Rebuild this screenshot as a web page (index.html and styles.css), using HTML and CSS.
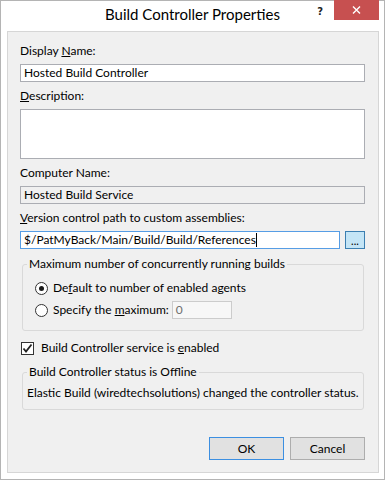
FILE: index.html
```html
<!DOCTYPE html>
<html lang="en">
<head>
  <meta charset="UTF-8" />
  <title>Build Controller Properties</title>
  <link rel="stylesheet" href="styles.css">
</head>
<body>
  <div class="window">
    <!-- Title bar -->
    <div class="titlebar">
      <span></span>
      <span class="title">Build Controller Properties</span>
      <div class="caption-buttons">
        <span class="help">?</span>
        <span class="close">
          <svg width="9" height="8" viewBox="0 0 9 8">
            <path d="M1 0.5 L8 7.5 M8 0.5 L1 7.5" stroke="#fff" stroke-width="1.4" fill="none" />
          </svg>
        </span>
      </div>
    </div>

    <!-- Dialog body -->
    <div class="client">
      <label class="field-label">Display <u>N</u>ame:</label>
      <div class="textbox">Hosted Build Controller</div>

      <label class="field-label"><u>D</u>escription:</label>
      <div class="textbox multiline"></div>

      <label class="field-label">Computer Name:</label>
      <div class="textbox readonly">Hosted Build Service</div>

      <label class="field-label"><u>V</u>ersion control path to custom assemblies:</label>
      <div class="path-row">
        <div class="textbox focused">$/PatMyBack/Main/Build/Build/References<span class="caret"></span></div>
        <button class="browse">...</button>
      </div>

      <fieldset class="group">
        <legend>Maximum number of concurrently running builds</legend>
        <div class="group-body radios">
          <div class="option-row">
            <span class="radio checked"></span>
            <span>De<u>f</u>ault to number of enabled agents</span>
          </div>
          <div class="option-row">
            <span class="radio"></span>
            <span>Specify the <u>m</u>aximum:</span>
            <div class="textbox small disabled">0</div>
          </div>
        </div>
      </fieldset>

      <div class="check-row">
        <span class="checkbox">
          <svg width="11" height="11" viewBox="0 0 11 11">
            <path d="M1.5 5.5 L4 8.5 L9.5 1.5" stroke="#222" stroke-width="1.8" fill="none" />
          </svg>
        </span>
        <span>Build Controller service is <u>e</u>nabled</span>
      </div>

      <fieldset class="group status">
        <legend>Build Controller status is Offline</legend>
        <div class="group-body">Elastic Build (wiredtechsolutions) changed the controller status.</div>
      </fieldset>

      <div class="button-row">
        <button class="btn default">OK</button>
        <button class="btn">Cancel</button>
      </div>
    </div>
  </div>
</body>
</html>
```

FILE: styles.css
```css
/* Basic reset */
* {
  box-sizing: border-box;
}
html, body {
  margin: 0;
  padding: 0;
}
body {
  font-family: "Segoe UI", Lato, sans-serif;
  font-size: 12px;
  color: #000;
  background: #fff;
}
/* Window frame */
.window {
  width: 385px;
  height: 480px;
  border: 1px solid #b4b4b4;
  background: #fff;
  display: flex;
  flex-direction: column;
}
/* Title bar */
.titlebar {
  height: 30px;
  display: grid;
  grid-template-columns: 1fr auto 1fr;
}
.titlebar .title {
  font-size: 15px;
  line-height: 26px;
  color: #000;
  white-space: nowrap;
}
.caption-buttons {
  display: flex;
  justify-content: flex-end;
  align-items: flex-start;
  margin-right: 5px;
}
.help {
  font-family: "DejaVu Sans", sans-serif;
  font-weight: bold;
  font-size: 10px;
  line-height: 22px;
  color: #222;
  margin-right: 11px;
}
.close {
  width: 45px;
  height: 20px;
  margin-top: -1px;
  background: #c75050;
  display: flex;
  align-items: center;
  justify-content: center;
}
/* Client area */
.client {
  flex: 1;
  margin: 0 5px 6px 6px;
  border: 1px solid #d6d6d6;
  background: #f0f0f0;
  padding: 11px 13px 12px 12px;
  display: flex;
  flex-direction: column;
}
.field-label {
  display: block;
  line-height: 16px;
  margin-bottom: 5px;
}
/* Text boxes */
.textbox {
  height: 18px;
  border: 1px solid #abadb3;
  background: #fff;
  line-height: 16px;
  padding: 0 3px;
  margin-bottom: 6px;
  white-space: nowrap;
  overflow: hidden;
}
.textbox.multiline {
  height: 50px;
}
.textbox.readonly {
  background: #f0f0f0;
}
.textbox.focused {
  border-color: #569de5;
  flex: 1;
  margin-bottom: 0;
}
.caret {
  display: inline-block;
  width: 1px;
  height: 14px;
  background: #000;
  vertical-align: -3px;
}
.path-row {
  display: flex;
  gap: 5px;
}
.browse {
  width: 20px;
  height: 18px;
  padding: 0;
  border: 1px solid #3c7fb1;
  background: #c4e5f6;
  font-family: inherit;
  font-size: 11px;
  line-height: 18px;
  color: #000;
}
/* Group boxes */
.group {
  margin: 7px 1px 0 2px;
  padding: 0;
  border: 1px solid #d9d9d9;
  border-radius: 3px;
  min-width: 0;
}
.group legend {
  margin-left: 4px;
  padding: 0 2px;
  line-height: 16px;
}
.group-body {
  padding: 5px 4px 9px 4px;
}
.group-body.radios {
  padding: 5px 0 9px 12px;
}
.option-row {
  display: flex;
  align-items: center;
  height: 22px;
  line-height: 22px;
}
.radio {
  width: 13px;
  height: 13px;
  border: 1px solid #333;
  border-radius: 50%;
  background: #fff;
  margin-right: 5px;
  display: flex;
  align-items: center;
  justify-content: center;
}
.radio.checked::after {
  content: "";
  width: 5px;
  height: 5px;
  border-radius: 50%;
  background: #1a1a1a;
}
.textbox.small {
  width: 60px;
  margin: 0 0 0 3px;
}
.textbox.disabled {
  background: #f7f7f7;
  border-color: #cccccc;
  color: #6d6d6d;
}
/* Checkbox row */
.check-row {
  display: flex;
  align-items: center;
  height: 20px;
  line-height: 20px;
  margin-top: 7px;
  margin-left: 1px;
}
.checkbox {
  width: 13px;
  height: 13px;
  border: 1px solid #333;
  background: #fff;
  margin-right: 7px;
  display: flex;
  align-items: center;
  justify-content: center;
}
.group.status {
  margin-top: 6px;
}
/* Dialog buttons */
.button-row {
  margin-top: auto;
  display: flex;
  justify-content: flex-end;
  gap: 6px;
}
.btn {
  width: 75px;
  height: 23px;
  border: 1px solid #adadad;
  background: #e1e1e1;
  font-family: inherit;
  font-size: 12px;
  color: #000;
  padding: 0;
}
.btn.default {
  border-color: #3c8fe1;
}
```
